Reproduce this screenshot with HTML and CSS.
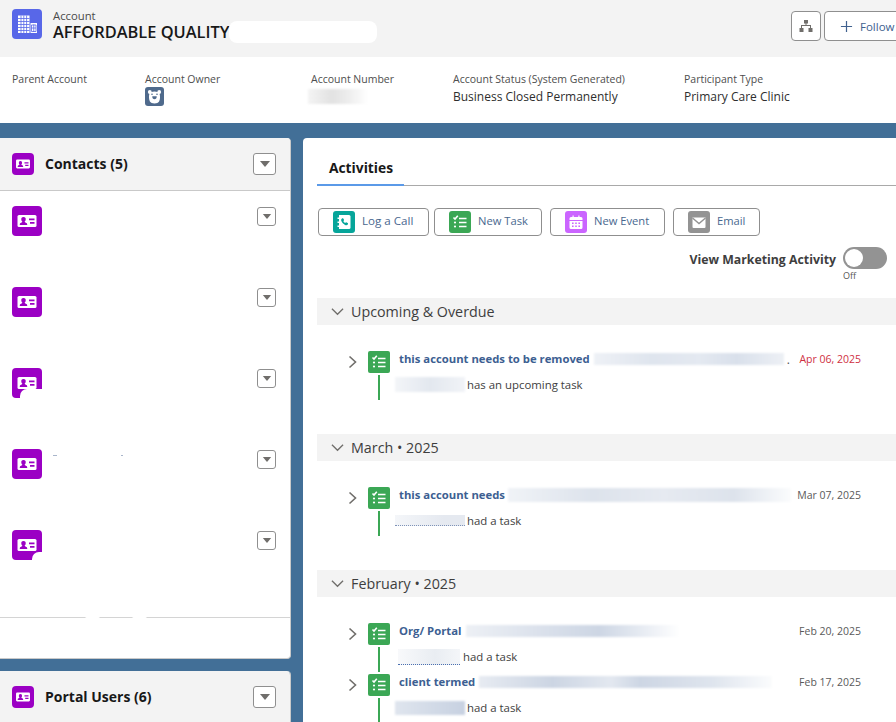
FILE: index.html
```html
<!DOCTYPE html>
<html lang="en">
<head>
<meta charset="utf-8">
<title>Account</title>
<link rel="stylesheet" href="styles.css">
</head>
<body>
<svg class="defs" width="0" height="0" aria-hidden="true">
  <symbol id="i-card" viewBox="0 0 30 30"><path fill="#fff" d="M7 9h16a1.500 1.500 0 0 1 1.500 1.500v9A1.500 1.500 0 0 1 23 21H7a1.500 1.500 0 0 1-1.500-1.500v-9A1.500 1.500 0 0 1 7 9z"/><path fill="#9b00c4" d="M11.500 11a2.200 2.200 0 0 1 2.200 2.500c0 1-.5 1.800-1.100 2.200 0 .7 2.600 1 2.600 2.300v1H7.800v-1c0-1.300 2.600-1.600 2.600-2.300-.6-.4-1.100-1.200-1.100-2.200a2.200 2.200 0 0 1 2.200-2.500zM17 12.500h5.500v1.800H17zM18 16h4.500v1.800H18z"/></symbol>
  <symbol id="i-task" viewBox="0 0 22 22"><g fill="none" stroke="#fff" stroke-width="1.600"><path d="M4.500 6.500l1.500 1.500 2.800-3.200"/><path d="M10 7.500h7.500M10 11.500h7.500M10 15.500h7.500"/></g><circle cx="6" cy="11.500" r="1.100" fill="#fff"/><circle cx="6" cy="15.500" r="1.100" fill="#fff"/></symbol>
  <symbol id="i-chev" viewBox="0 0 12 14"><path fill="none" stroke="#706e6b" stroke-width="1.600" d="M2.500 1.500l6 5.500-6 5.500"/></symbol>
  <symbol id="i-down" viewBox="0 0 14 9"><path fill="none" stroke="#706e6b" stroke-width="1.400" d="M1 1.500l6 6 6-6"/></symbol>
  <symbol id="i-tri" viewBox="0 0 12 8"><path fill="#706e6b" d="M1 1h10L6 7z"/></symbol>
</svg>

<header class="top">
  <svg class="icon-account" viewBox="0 0 30 30"><rect width="30" height="30" rx="4" fill="#5867e8"/><path fill="#fff" d="M6 6.500h11.500V24H6z"/><path fill="#fff" d="M18.500 14h6.500v10h-6.500z"/><path fill="none" stroke="#5867e8" stroke-width=".8" d="M9 6.500V24M11.800 6.500V24M14.600 6.500V24M6 9.500h11.500M6 12.500h11.500M6 15.500h11.500M6 18.500h11.500M6 21.500h11.500M21.750 15.500V23M19.500 19h4.500M19.500 16h4.500V22.500h-4.500z"/></svg>
  <div class="top-title">
    <div class="top-kind">Account</div>
    <div class="top-name-row"><h1 class="top-name">AFFORDABLE QUALITY</h1><span class="name-mask"></span></div>
  </div>
  <div class="top-actions">
    <button class="btn-icon" type="button" aria-label="Hierarchy"><svg width="14" height="14" viewBox="0 0 14 14"><path fill="#706e6b" d="M5 1h4v3.500H7.500V6H12v3h1.500v4h-4V9H11V7H3v2h1.500v4h-4V9H2V6h4.500V4.500H5z"/></svg></button>
    <button class="btn-follow" type="button"><svg width="13" height="13" viewBox="0 0 14 14"><path fill="none" stroke="#40618f" stroke-width="1.300" d="M7 1v12M1 7h12"/></svg><span>Follow</span></button>
  </div>
</header>

<section class="details">
  <div class="field"><div class="field-label">Parent Account</div></div>
  <div class="field"><div class="field-label">Account Owner</div>
    <svg class="owner" viewBox="0 0 19 19"><rect width="19" height="19" rx="3" fill="#4f6a8c"/><circle cx="4.800" cy="5" r="1.900" fill="#fff"/><circle cx="14.200" cy="5" r="1.900" fill="#fff"/><path fill="#fff" d="M4.500 6.500C5.500 3.800 13.500 3.800 14.500 6.500c.9 2.800.6 5.800-.4 8-.7 1.300-2.500 2-4.600 2s-3.900-.7-4.600-2c-1-2.200-1.300-5.200-.4-8z"/><circle cx="7" cy="7.200" r=".8" fill="#4f6a8c"/><circle cx="12" cy="7.200" r=".8" fill="#4f6a8c"/><path fill="#4f6a8c" d="M7.300 9.200h4.400c.2 1.800-.9 3-2.200 3s-2.400-1.200-2.200-3z"/></svg>
  </div>
  <div class="field"><div class="field-label">Account Number</div><div class="number-blur"></div></div>
  <div class="field"><div class="field-label">Account Status (System Generated)</div><div class="field-value">Business Closed Permanently</div></div>
  <div class="field"><div class="field-label">Participant Type</div><div class="field-value">Primary Care Clinic</div></div>
</section>

<main class="board">
  <aside class="side">
    <section class="card card-contacts">
      <div class="card-head">
        <svg class="icon-head"><use href="#i-card"/></svg>
        <h2 class="card-title">Contacts (5)</h2>
        <button class="menu menu-lg" type="button" aria-label="Menu"><svg width="12" height="8"><use href="#i-tri"/></svg></button>
      </div>
      <ul class="contact-list">
        <li class="contact"><svg class="icon-contact"><use href="#i-card"/></svg><button class="menu" type="button" aria-label="Menu"><svg width="10" height="7"><use href="#i-tri"/></svg></button></li>
        <li class="contact"><svg class="icon-contact"><use href="#i-card"/></svg><button class="menu" type="button" aria-label="Menu"><svg width="10" height="7"><use href="#i-tri"/></svg></button></li>
        <li class="contact"><svg class="icon-contact"><use href="#i-card"/></svg><span class="chip chip-left"></span><button class="menu" type="button" aria-label="Menu"><svg width="10" height="7"><use href="#i-tri"/></svg></button></li>
        <li class="contact"><svg class="icon-contact"><use href="#i-card"/></svg><span class="speck speck-a"></span><span class="speck speck-b"></span><button class="menu" type="button" aria-label="Menu"><svg width="10" height="7"><use href="#i-tri"/></svg></button></li>
        <li class="contact"><svg class="icon-contact"><use href="#i-card"/></svg><span class="chip chip-right"></span><button class="menu" type="button" aria-label="Menu"><svg width="10" height="7"><use href="#i-tri"/></svg></button></li>
      </ul>
      <div class="card-foot"><span class="gap gap-a"></span><span class="gap gap-b"></span></div>
    </section>
    <section class="card">
      <div class="card-head">
        <svg class="icon-head"><use href="#i-card"/></svg>
        <h2 class="card-title">Portal Users (6)</h2>
        <button class="menu menu-lg" type="button" aria-label="Menu"><svg width="12" height="8"><use href="#i-tri"/></svg></button>
      </div>
    </section>
  </aside>

  <section class="activity">
    <div class="tabs"><div class="tab">Activities</div></div>
    <div class="quick">
      <button class="quick-btn qb-call" type="button">
        <svg class="quick-icon" viewBox="0 0 22 22"><rect width="22" height="22" rx="3" fill="#06a59a"/><path fill="#fff" d="M6 4h10a1.500 1.500 0 0 1 1.500 1.500v11A1.500 1.500 0 0 1 16 18H6z"/><path fill="#fff" d="M4.500 6.500h2v1.500h-2zM4.500 10.500h2V12h-2zM4.500 14.500h2V16h-2z"/><path fill="#06a59a" d="M9 7.500c.6-.4 1.100-.3 1.400.2l.6 1c.2.400.1.800-.3 1.100l-.4.300c.4 1 1 1.600 1.900 2l.3-.4c.3-.4.700-.5 1.100-.3l1 .6c.5.300.6.800.2 1.400-.6.900-1.600 1-2.700.5-2-.9-3.400-2.500-3.900-4.300-.2-.9.100-1.600.8-2.100z"/></svg>
        <span>Log a Call</span>
      </button>
      <button class="quick-btn qb-task" type="button">
        <svg class="quick-icon" viewBox="0 0 22 22"><rect width="22" height="22" rx="3" fill="#3ba755"/><use href="#i-task" width="22" height="22"/></svg>
        <span>New Task</span>
      </button>
      <button class="quick-btn qb-event" type="button">
        <svg class="quick-icon" viewBox="0 0 22 22"><rect width="22" height="22" rx="3" fill="#cb65ff"/><path fill="#fff" d="M6 6h1.500V4.500h1.200V6h4.600V4.500h1.200V6H16a1.500 1.500 0 0 1 1.500 1.500V9h-13V7.500A1.500 1.500 0 0 1 6 6zM4.500 10h13v6.500A1.500 1.500 0 0 1 16 18H6a1.500 1.500 0 0 1-1.500-1.500z"/><path fill="#cb65ff" d="M7 11.500h1.600V13H7zM10.200 11.500h1.600V13h-1.600zM13.400 11.500H15V13h-1.600zM7 14.500h1.600V16H7zM10.200 14.500h1.600V16h-1.600zM13.400 14.500H15V16h-1.600z"/></svg>
        <span>New Event</span>
      </button>
      <button class="quick-btn qb-email" type="button">
        <svg class="quick-icon" viewBox="0 0 22 22"><rect width="22" height="22" rx="3" fill="#939393"/><path fill="#fff" d="M4.500 6.500h13v9.500a1 1 0 0 1-1 1h-11a1 1 0 0 1-1-1z"/><path fill="none" stroke="#939393" stroke-width="1.400" d="M4.500 7l6.500 5.500L17.500 7"/></svg>
        <span>Email</span>
      </button>
    </div>
    <div class="marketing">
      <span class="marketing-label">View Marketing Activity</span>
      <div class="toggle-box"><span class="toggle"><span class="knob"></span></span><span class="toggle-state">Off</span></div>
    </div>

    <section class="group">
      <h3 class="group-head"><svg width="13" height="9"><use href="#i-down"/></svg>Upcoming &amp; Overdue</h3>
      <article class="task">
        <svg class="task-chev"><use href="#i-chev"/></svg>
        <div class="rail"><svg class="task-icon" viewBox="0 0 22 22"><rect width="22" height="22" rx="2" fill="#3ba755"/><use href="#i-task" width="22" height="22"/></svg><span class="rail-line"></span></div>
        <div class="task-body">
          <div class="task-row"><a class="task-title">this account needs to be removed</a><span class="blur b-remove"></span><span class="dot">.</span><time class="date overdue">Apr 06, 2025</time></div>
          <div class="task-sub"><span class="blur-name n-up"></span>has an upcoming task</div>
        </div>
      </article>
    </section>

    <section class="group">
      <h3 class="group-head"><svg width="13" height="9"><use href="#i-down"/></svg>March • 2025</h3>
      <article class="task">
        <svg class="task-chev"><use href="#i-chev"/></svg>
        <div class="rail"><svg class="task-icon" viewBox="0 0 22 22"><rect width="22" height="22" rx="2" fill="#3ba755"/><use href="#i-task" width="22" height="22"/></svg><span class="rail-line"></span></div>
        <div class="task-body">
          <div class="task-row"><a class="task-title">this account needs</a><span class="blur b-needs"></span><time class="date">Mar 07, 2025</time></div>
          <div class="task-sub"><span class="blur-name n-mar"></span>had a task</div>
        </div>
      </article>
    </section>

    <section class="group group-last">
      <h3 class="group-head"><svg width="13" height="9"><use href="#i-down"/></svg>February • 2025</h3>
      <article class="task task-tight">
        <svg class="task-chev"><use href="#i-chev"/></svg>
        <div class="rail"><svg class="task-icon" viewBox="0 0 22 22"><rect width="22" height="22" rx="2" fill="#3ba755"/><use href="#i-task" width="22" height="22"/></svg><span class="rail-line"></span></div>
        <div class="task-body">
          <div class="task-row"><a class="task-title">Org/ Portal</a><span class="blur b-portal"></span><time class="date">Feb 20, 2025</time></div>
          <div class="task-sub"><span class="blur-name n-feb"></span>had a task</div>
        </div>
      </article>
      <article class="task task-tight">
        <svg class="task-chev"><use href="#i-chev"/></svg>
        <div class="rail"><svg class="task-icon" viewBox="0 0 22 22"><rect width="22" height="22" rx="2" fill="#3ba755"/><use href="#i-task" width="22" height="22"/></svg><span class="rail-line"></span></div>
        <div class="task-body">
          <div class="task-row"><a class="task-title">client termed</a><span class="blur b-client"></span><time class="date">Feb 17, 2025</time></div>
          <div class="task-sub"><span class="blur-name n-client"></span>had a task</div>
        </div>
      </article>
    </section>
  </section>
</main>
</body>
</html>
```
FILE: styles.css
```css
* { box-sizing: border-box; }
html, body { margin: 0; padding: 0; }
body {
  width: 896px;
  height: 722px;
  overflow: hidden;
  background: #426f97;
  font-family: "Open Sans", "Noto Sans", "Liberation Sans", sans-serif;
  color: #2e2e2e;
  font-size: 12px;
}
h1, h2, h3 { margin: 0; }
ul { margin: 0; padding: 0; list-style: none; }
button { font: inherit; background: #fff; cursor: pointer; }
.defs { position: absolute; }

.top {
  height: 57px;
  background: #f3f3f3;
  display: flex;
  align-items: flex-start;
  padding: 9px 0 0 12px;
}
.icon-account { width: 30px; height: 30px; flex: none; }
.top-title { margin-left: 11px; }
.top-kind { font-size: 11.300px; line-height: 13px; color: #4a4a4a; }
.top-name-row { display: flex; align-items: center; margin-top: -1px; }
.top-name { font-size: 16.400px; line-height: 18px; font-weight: 600; color: #181818; white-space: nowrap; }
.name-mask { width: 148px; height: 22px; background: #fff; border-radius: 8px; flex: none; }
.top-actions { margin-left: auto; display: flex; gap: 3px; margin-top: 2px; width: 105px; overflow: hidden; flex: none; }
.btn-icon { width: 30px; height: 30px; border: 1px solid #8f8f8f; border-radius: 4px; padding: 0; display: flex; align-items: center; justify-content: center; flex: none; }
.btn-follow { width: 90px; height: 30px; border: 1px solid #8f8f8f; border-radius: 4px; padding: 0 0 0 15px; display: flex; align-items: center; gap: 7px; color: #40618f; font-size: 11.500px; flex: none; }

.details {
  height: 66px;
  background: #fff;
  display: grid;
  grid-template-columns: 133px 166px 142px 231px 1fr;
  padding: 15px 0 0 12px;
}
.field-label { font-size: 10.500px; line-height: 15px; color: #4e4e4e; white-space: nowrap; }
.field-value { font-size: 12px; line-height: 18px; margin-top: 1px; color: #2e2e2e; white-space: nowrap; }
.owner { width: 19px; height: 19px; display: block; }
.number-blur { width: 60px; height: 15px; margin: 2px 0 0 -3px; background: linear-gradient(90deg, #f4f4f4, #e2e2e2 40%, #ececec 65%, #fff); filter: blur(1px); }

.board {
  display: grid;
  grid-template-columns: 291px 593px;
  column-gap: 12px;
  padding-top: 15px;
  align-items: start;
}
.side { display: flex; flex-direction: column; gap: 12px; }
.card {
  background: #fff;
  border-right: 1px solid #c9c9c9;
  border-bottom: 1px solid #c9c9c9;
  border-radius: 0 4px 4px 0;
  overflow: hidden;
}
.card-contacts { height: 521px; }
.card-head {
  height: 53px;
  background: #f3f3f3;
  border-bottom: 1px solid #c9c9c9;
  display: flex;
  align-items: center;
  padding: 0 14px 1px 12px;
}
.icon-head { width: 22px; height: 22px; flex: none; background: #9b00c4; border-radius: 4px; }
.card-title { font-size: 14px; line-height: 20px; font-weight: 700; color: #181818; margin: 1px 0 0 11px; }
.menu { border: 1px solid #8f8f8f; border-radius: 3px; width: 19px; height: 19px; padding: 0; margin-left: auto; display: flex; align-items: center; justify-content: center; flex: none; }
.menu-lg { width: 23px; height: 22px; }
.contact-list { padding-top: 15px; }
.contact { height: 81px; display: flex; align-items: flex-start; padding: 0 14px 0 12px; position: relative; }
.icon-contact { width: 30px; height: 30px; flex: none; background: #9b00c4; border-radius: 4px; }
.contact .menu { margin-top: 1px; }
.chip { position: absolute; background: #fff; }
.chip-left { left: 20px; top: 21px; width: 24px; height: 11px; border-radius: 7px 0 0 0; }
.chip-right { left: 32px; top: 22px; width: 12px; height: 10px; border-radius: 7px 0 0 0; }
.speck { position: absolute; height: 1px; background: #a9b6cb; }
.speck-a { left: 53px; top: 6px; width: 4px; }
.speck-b { left: 121px; top: 6px; width: 2px; }
.card-foot { margin-top: 6px; border-top: 1px solid #d4d4d4; height: 40px; position: relative; }
.gap { position: absolute; top: -1px; width: 15px; height: 3px; background: #fff; border-radius: 2px; }
.gap-a { left: 85px; }
.gap-b { left: 132px; }

.activity {
  background: #fff;
  border-radius: 4px 0 0 0;
  padding: 0 0 0 14px;
  height: 600px;
  overflow: hidden;
}
.tabs { height: 48px; border-bottom: 1px solid #a9a9a9; display: flex; align-items: flex-end; }
.tab {
  width: 87px;
  height: 48px;
  padding: 20px 0 0 12px;
  margin-bottom: -1px;
  border-bottom: 2px solid #5b9ae8;
  font-size: 13.800px;
  line-height: 20px;
  font-weight: 700;
  color: #181818;
}
.quick { display: flex; gap: 8px; padding: 22px 0 0 1px; }
.quick-btn {
  height: 28px;
  border: 1px solid #8f8f8f;
  border-radius: 4px;
  padding: 0 0 0 14px;
  display: flex;
  align-items: center;
  gap: 7px;
  font-size: 11.200px;
  line-height: 14px;
  color: #49688f;
  white-space: nowrap;
  flex: none;
}
.quick-btn span { margin-bottom: 2px; }
.qb-call { width: 111px; margin-right: -3px; font-size: 11.600px; }
.qb-task { width: 108px; }
.qb-event { width: 115px; }
.qb-email { width: 87px; }
.quick-icon { width: 22px; height: 22px; flex: none; }
.marketing { display: flex; justify-content: flex-end; align-items: flex-start; padding: 11px 9px 0 0; height: 62px; }
.marketing-label { font-size: 12.300px; line-height: 22px; font-weight: 700; color: #3e3e3e; margin: 2px 7px 0 0; }
.toggle-box { display: flex; flex-direction: column; align-items: flex-start; }
.toggle { width: 44px; height: 22px; background: #939393; border-radius: 11px; padding: 2px; display: block; }
.knob { width: 18px; height: 18px; background: #fff; border-radius: 50%; display: block; }
.toggle-state { font-size: 9px; line-height: 12px; color: #555; margin-top: 1px; }

.group { height: 136px; }
.group-head {
  height: 27px;
  background: #f3f3f3;
  display: flex;
  align-items: center;
  gap: 7px;
  padding-left: 14px;
  font-size: 14.300px;
  line-height: 20px;
  font-weight: 400;
  color: #3e3e3e;
}
.task { display: flex; align-items: flex-start; padding: 26px 0 0 30px; }
.task-tight { padding-top: 0; height: 51px; }
.group-last .task-tight:first-of-type { margin-top: 26px; }
.task-chev { width: 12px; height: 14px; margin-top: 4px; flex: none; }
.rail { width: 22px; margin-left: 9px; display: flex; flex-direction: column; align-items: center; flex: none; }
.task-icon { width: 22px; height: 22px; display: block; }
.rail-line { width: 2px; height: 25px; margin-top: 2px; background: #3ba755; display: block; }
.task-body { margin-left: 9px; width: 462px; }
.task-row { display: flex; align-items: center; height: 16px; }
.task-title { font-size: 11.300px; line-height: 16px; font-weight: 700; color: #3d5f92; white-space: nowrap; }
.date { margin-left: auto; font-size: 10.500px; line-height: 16px; color: #5a5a5a; white-space: nowrap; }
.overdue { color: #cf2f3f; }
.dot { color: #555; margin-left: 3px; }
.blur { display: block; height: 12px; background: linear-gradient(90deg, #eef1f6, #dfe5ee 30%, #e4e9f1 55%, #d9e0eb 75%, #edf0f5); filter: blur(1px); margin-left: 4px; }
.b-remove { width: 190px; }
.b-needs { width: 283px; height: 14px; margin-left: 3px; background: linear-gradient(90deg, #f0f3f7, #dde3ec 30%, #e6eaf1 55%, #dde3ec 80%, #fbfcfd); }
.b-portal { width: 214px; margin-left: 4px; background: linear-gradient(90deg, #edf0f5, #dde3ed 30%, #cdd6e4 62%, #e4e9f1 80%, #fff); }
.b-client { width: 293px; background: linear-gradient(90deg, #e7ebf2, #ccd5e3 25%, #e3e8f0 45%, #cdd6e4 55%, #dfe5ee 80%, #fbfcfd); }
.task-sub { display: flex; align-items: center; margin: 9px 0 0 -4px; font-size: 11.400px; line-height: 17px; color: #3e3e3e; }
.blur-name { display: block; width: 70px; height: 15px; margin-right: 2px; background: linear-gradient(90deg, #f3f5f8, #e3e8ef 50%, #f1f3f7); filter: blur(1px); }
.n-mar { height: 11px; border-bottom: 1px dotted #7f93b8; filter: none; background: linear-gradient(90deg, #f4f6f9, #e5e9f0 70%); }
.n-feb { width: 62px; height: 16px; margin-left: 3px; margin-right: 3px; border-bottom: 1px dotted #4a6fb0; filter: none; background: linear-gradient(90deg, #f8f9fb, #e9edf2 60%, #f4f6f9); }
.n-client { height: 14px; background: linear-gradient(90deg, #dfe5ee, #c7d1e1); }
```
